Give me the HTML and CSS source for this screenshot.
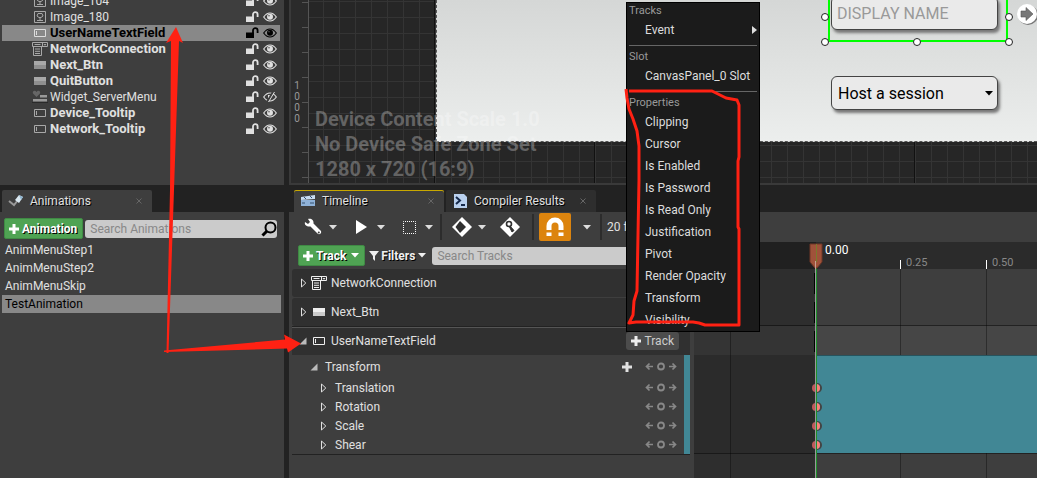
FILE: index.html
```
<!DOCTYPE html>
<html lang="en">
<head>
    <meta charset="UTF-8">
    <meta name="viewport" content="width=device-width, initial-scale=1.0">
    <title>Widget Blueprint Editor</title>
    <link rel="stylesheet" href="styles.css">
</head>
<body>
    <!-- icon set -->
    <svg class="defs" width="0" height="0">
        <symbol id="i-lock" viewBox="0 0 13 12"><path d="M0 5.500h8V11H0z" fill="currentColor"/><path d="M7 6V3.500a2.300 2.300 0 0 1 4.600 0V6" fill="none" stroke="currentColor" stroke-width="1.800"/></symbol>
        <symbol id="i-eye" viewBox="0 0 14 10"><path d="M.7 5C3 1.600 5 1 7 1s4 .6 6.300 4C11 8.400 9 9 7 9S3 8.400.7 5z" fill="none" stroke="currentColor" stroke-width="1.200"/><circle cx="7" cy="4.700" r="3" fill="currentColor"/><circle cx="6" cy="3.800" r=".8" fill="#555"/></symbol>
        <symbol id="i-eye-off" viewBox="0 0 14 10"><path d="M.7 5C3 1.600 5 1 7 1s4 .6 6.300 4C11 8.400 9 9 7 9S3 8.400.7 5z" fill="none" stroke="currentColor" stroke-width="1.200"/><path d="M5 3v4l4-4z" fill="currentColor"/><path d="M4 10l6-10" stroke="#3e3e3e" stroke-width="2"/><path d="M5.500 10l6-10" stroke="currentColor"/></symbol>
        <symbol id="i-image" viewBox="0 0 16 12"><path d="M2.500.5h11v11h-11zM5 9.500h6M8 9V6" fill="none" stroke="currentColor"/><path d="M6 2.500h4L11 5 9 6.500H7L5 5z" fill="none" stroke="currentColor"/></symbol>
        <symbol id="i-field" viewBox="0 0 16 14"><path d="M2.500 3.500h11v7h-11zM4.500 5v4" fill="none" stroke="currentColor"/></symbol>
        <symbol id="i-button" viewBox="0 0 16 14"><path d="M2 3h12v8H2z" fill="currentColor"/><path d="M2 7h12v4H2z" fill="#000" opacity=".15"/></symbol>
        <symbol id="i-combo" viewBox="0 0 16 14"><path d="M.5.5h15v4H.5zM10.500.5v4M2.500 2.500h6M1.500 4.500v9h8v-9M3 7h5M3 9.300h5M3 11.500h5" fill="none" stroke="currentColor"/><path d="M11.500 2h3L13 3.700z" fill="currentColor"/></symbol>
        <symbol id="i-user" viewBox="0 0 16 14"><path d="M4.500 7L1 3.500C0 1 3-.5 4.500 2 6-.5 9 1 8 3.500z" fill="#666"/><path d="M8 5h7v2.500H8zM1 9h14v2.500H1z" fill="#999"/><path d="M0 12h16v1H0z" fill="#2a2a2a"/></symbol>
        <symbol id="i-plus" viewBox="0 0 12 12"><path d="M4.500 1h3v3.500H11v3H7.500V11h-3V7.500H1v-3h3.500z" fill="currentColor"/></symbol>
        <symbol id="i-x" viewBox="0 0 6 6"><path d="M.5.5l5 5m0-5l-5 5" stroke="currentColor" fill="none"/></symbol>
        <symbol id="i-down" viewBox="0 0 8 5"><path d="M0 0h8L4 4.500z" fill="currentColor"/></symbol>
        <symbol id="i-shut" viewBox="0 0 6 10"><path d="M.5 1v8L4.800 5z" fill="none" stroke="currentColor"/></symbol>
        <symbol id="i-open" viewBox="0 0 8 8"><path d="M7.500.5v7h-7z" fill="currentColor"/></symbol>
        <symbol id="i-keys" viewBox="0 0 32 9"><path d="M8 4.500H2M4.500 1.500l-3 3 3 3M24 4.500h6M27.500 1.500l3 3-3 3" fill="none" stroke="currentColor" stroke-width="1.700"/><circle cx="16" cy="4.500" r="3" fill="none" stroke="currentColor" stroke-width="1.800"/></symbol>
    </svg>

    <div class="editor">
        <section class="hierarchy">
            <ul class="tree">
                <li><svg class="kind"><use href="#i-image"/></svg><span>Image_104</span><svg class="lock"><use href="#i-lock"/></svg><svg class="eye"><use href="#i-eye"/></svg></li>
                <li><svg class="kind"><use href="#i-image"/></svg><span>Image_180</span><svg class="lock"><use href="#i-lock"/></svg><svg class="eye"><use href="#i-eye"/></svg></li>
                <li class="var selected"><svg class="kind"><use href="#i-field"/></svg><span>UserNameTextField</span><svg class="lock"><use href="#i-lock"/></svg><svg class="eye"><use href="#i-eye"/></svg></li>
                <li class="var"><svg class="kind"><use href="#i-combo"/></svg><span>NetworkConnection</span><svg class="lock"><use href="#i-lock"/></svg><svg class="eye"><use href="#i-eye"/></svg></li>
                <li class="var"><svg class="kind"><use href="#i-button"/></svg><span>Next_Btn</span><svg class="lock"><use href="#i-lock"/></svg><svg class="eye"><use href="#i-eye"/></svg></li>
                <li class="var"><svg class="kind"><use href="#i-button"/></svg><span>QuitButton</span><svg class="lock"><use href="#i-lock"/></svg><svg class="eye"><use href="#i-eye"/></svg></li>
                <li><svg class="kind"><use href="#i-user"/></svg><span>Widget_ServerMenu</span><svg class="lock"><use href="#i-lock"/></svg><svg class="eye"><use href="#i-eye-off"/></svg></li>
                <li class="var"><svg class="kind"><use href="#i-field"/></svg><span>Device_Tooltip</span><svg class="lock"><use href="#i-lock"/></svg><svg class="eye"><use href="#i-eye"/></svg></li>
                <li class="var"><svg class="kind"><use href="#i-field"/></svg><span>Network_Tooltip</span><svg class="lock"><use href="#i-lock"/></svg><svg class="eye"><use href="#i-eye"/></svg></li>
            </ul>
        </section>

        <section class="designer">
            <div class="v-ruler"><span>1</span><span>0</span><span>0</span><span>0</span></div>
            <div class="stage">
                <div class="artboard">
                    <input class="widget name-field" type="text" placeholder="DISPLAY NAME" aria-label="Display name">
                    <select class="widget session" aria-label="Session"><option>Host a session</option></select>
                    <svg class="session-arrow"><use href="#i-down"/></svg>
                    <div class="selection">
                        <i class="handle ml"></i><i class="handle mr"></i>
                        <i class="handle bl"></i><i class="handle bc"></i><i class="handle br"></i>
                    </div>
                    <svg class="next" viewBox="0 0 22 22"><circle cx="12" cy="12" r="10" fill="#777"/><circle cx="11" cy="11" r="10" fill="#fff"/><path d="M5 8h5V4.500l7 6.500-7 6.500V14H5z" fill="#777" stroke="#555" stroke-width=".6"/></svg>
                </div>
                <div class="watermark">
                    <div>Device Content Scale 1.0</div>
                    <div>No Device Safe Zone Set</div>
                    <div>1280 x 720 (16:9)</div>
                </div>
            </div>
        </section>

        <section class="animations">
            <div class="tabs">
                <div class="tab">
                    <svg class="tab-icon" viewBox="0 0 16 16"><path d="M1 8l5 4 4-5" fill="none" stroke="#999" stroke-width="2"/><path d="M7 7l4-5 4 2-4 6z" fill="#dbe9f2"/><path d="M11 2l4 2-2 3z" fill="#8fb6d0"/></svg>
                    <span>Animations</span>
                    <svg class="close"><use href="#i-x"/></svg>
                </div>
            </div>
            <div class="panel">
                <div class="bar">
                    <button class="green"><svg class="plus"><use href="#i-plus"/></svg>Animation</button>
                    <label class="search">
                        <input type="text" placeholder="Search Animations" aria-label="Search Animations">
                        <svg class="glass" viewBox="0 0 16 16"><circle cx="9.500" cy="6.500" r="5" fill="none" stroke="#000" stroke-width="2"/><path d="M6 10l-4.500 4.500" stroke="#000" stroke-width="3"/></svg>
                    </label>
                </div>
                <ul class="anims">
                    <li>AnimMenuStep1</li>
                    <li>AnimMenuStep2</li>
                    <li>AnimMenuSkip</li>
                    <li class="selected">TestAnimation</li>
                </ul>
            </div>
        </section>

        <section class="sequencer">
            <div class="tabs">
                <div class="tab active">
                    <svg class="tab-icon" viewBox="0 0 16 16"><path d="M1 4l14-2v4L1 7z" fill="#c9dcf0"/><path d="M1 7h14v6H1z" fill="#8fb2d8"/><path d="M4 4l2 2M10 3l2 2M2 10h3M10 10h4" stroke="#34506e"/></svg>
                    <span>Timeline</span>
                    <svg class="close"><use href="#i-x"/></svg>
                </div>
                <div class="tab idle">
                    <svg class="tab-icon" viewBox="0 0 16 16"><path d="M2 1h10l3 3v11H2z" fill="#b9d0ee"/><path d="M4 4l4 3.500L4 11M9 12h4" fill="none" stroke="#14284a" stroke-width="2"/></svg>
                    <span>Compiler Results</span>
                    <svg class="close"><use href="#i-x"/></svg>
                </div>
            </div>
            <div class="toolbar">
                <button class="tool wide" aria-label="Options"><svg class="big" viewBox="0 0 20 20"><path d="M2 5l3 2 2-2-2-3c3-1 6 1 5.500 4.500l7 7c2 2-.8 5-3 3l-7-7C4 10 1 8 2 5z" fill="#fff"/><circle cx="15.800" cy="15.500" r="1" fill="#3e3e3e"/></svg><svg class="down"><use href="#i-down"/></svg></button>
                <button class="tool wide" aria-label="Play"><svg class="big" viewBox="0 0 20 20"><path d="M5 3l11 7-11 7z" fill="#fff"/></svg><svg class="down"><use href="#i-down"/></svg></button>
                <button class="tool wide" aria-label="Selection range"><svg class="big" viewBox="0 0 20 20"><path d="M4.500 4.500h12v12h-12z" fill="none" stroke="#fff" stroke-dasharray="1 1" stroke-dashoffset=".5"/></svg><svg class="down"><use href="#i-down"/></svg></button>
                <i class="sep"></i>
                <button class="tool wide" aria-label="Key options"><svg class="big" viewBox="0 0 20 20"><path d="M10 0l10 10-10 10L0 10z" fill="#fff"/><path d="M8 4l6 6-6 6-4.500-6z" fill="#303030"/></svg><svg class="down"><use href="#i-down"/></svg></button>
                <button class="tool" aria-label="Auto key"><svg class="big" viewBox="0 0 20 20"><path d="M10 0l10 10-10 10L0 10z" fill="#fff"/><circle cx="9" cy="7" r="2.500" fill="none" stroke="#303030" stroke-width="1.600"/><path d="M10 9l4 4.500-2 1.500-3-6" fill="#303030" stroke="#303030"/></svg></button>
                <i class="sep"></i>
                <button class="tool snap" aria-label="Snapping"><svg class="big" viewBox="0 0 20 20"><path d="M4 14V9a6 6 0 0 1 12 0v5" fill="none" stroke="#fff" stroke-width="5"/><path d="M1 13.500h6M13 13.500h6" stroke="#dc840e"/><path d="M1.500 15.500h5V19h-5zM13.500 15.500h5V19h-5z" fill="#fff"/></svg></button>
                <button class="tool snap-menu" aria-label="Snapping options"><svg class="down"><use href="#i-down"/></svg></button>
                <i class="sep"></i>
                <span class="fps">20 fps</span>
            </div>
            <div class="body">
                <div class="outliner">
                    <div class="bar">
                        <button class="green"><svg class="plus"><use href="#i-plus"/></svg>Track<svg class="down"><use href="#i-down"/></svg></button>
                        <button class="filters"><svg class="funnel" viewBox="0 0 10 10"><path d="M0 0h10L6 5v5L4 8V5z" fill="#eee"/></svg>Filters<svg class="down"><use href="#i-down"/></svg></button>
                        <label class="search"><input type="text" placeholder="Search Tracks" aria-label="Search Tracks"></label>
                    </div>
                    <div class="track"><svg class="shut"><use href="#i-shut"/></svg><svg class="kind"><use href="#i-combo"/></svg><span>NetworkConnection</span></div>
                    <div class="track"><svg class="shut"><use href="#i-shut"/></svg><svg class="kind"><use href="#i-button"/></svg><span>Next_Btn</span></div>
                    <div class="track current"><svg class="open"><use href="#i-open"/></svg><svg class="kind"><use href="#i-field"/></svg><span>UserNameTextField</span><button class="add-track"><svg class="plus"><use href="#i-plus"/></svg>Track</button></div>
                    <div class="group">
                        <div class="prop head"><svg class="open"><use href="#i-open"/></svg><span>Transform</span><svg class="plus"><use href="#i-plus"/></svg><svg class="keys"><use href="#i-keys"/></svg></div>
                        <div class="prop"><svg class="shut"><use href="#i-shut"/></svg><span>Translation</span><svg class="keys"><use href="#i-keys"/></svg></div>
                        <div class="prop"><svg class="shut"><use href="#i-shut"/></svg><span>Rotation</span><svg class="keys"><use href="#i-keys"/></svg></div>
                        <div class="prop"><svg class="shut"><use href="#i-shut"/></svg><span>Scale</span><svg class="keys"><use href="#i-keys"/></svg></div>
                        <div class="prop"><svg class="shut"><use href="#i-shut"/></svg><span>Shear</span><svg class="keys"><use href="#i-keys"/></svg></div>
                    </div>
                </div>
                <div class="timeline">
                    <div class="time-ruler">
                        <span class="tick t0">-0.25</span>
                        <span class="tick t2">0.25</span>
                        <span class="tick t3">0.50</span>
                    </div>
                    <div class="lane"></div>
                    <div class="lane"></div>
                    <div class="lane current"></div>
                    <div class="lane section"><div class="clip"><i></i><i></i><i></i><i></i></div></div>
                    <div class="before"></div>
                    <i class="line l0"></i><i class="line l2"></i><i class="line l3"></i>
                    <i class="mark m2"></i><i class="mark m3"></i>
                    <div class="starts"><i></i><i></i><i></i></div>
                    <i class="playline"></i>
                    <svg class="playhead" viewBox="0 0 14 26"><path d="M1 1h12v18l-5 6H6l-5-6z" fill="#a0523a" stroke="#6e3626"/><path d="M7.500 1v18" stroke="#7a7a2c"/><path d="M6.500 18v8" stroke="#c9a090"/></svg>
                    <span class="now">0.00</span>
                </div>
            </div>
        </section>
    </div>

    <div class="menu">
        <h4>Tracks</h4>
        <a href="#">Event<svg class="more" viewBox="0 0 5 8"><path d="M0 0l5 4-5 4z" fill="#ddd"/></svg></a>
        <hr>
        <h4>Slot</h4>
        <a href="#">CanvasPanel_0 Slot</a>
        <hr>
        <h4>Properties</h4>
        <a href="#">Clipping</a>
        <a href="#">Cursor</a>
        <a href="#">Is Enabled</a>
        <a href="#">Is Password</a>
        <a href="#">Is Read Only</a>
        <a href="#">Justification</a>
        <a href="#">Pivot</a>
        <a href="#">Render Opacity</a>
        <a href="#">Transform</a>
        <a href="#">Visibility</a>
    </div>

    <!-- red markup over the editor -->
    <svg class="notes" viewBox="0 0 760 360" width="760" height="360">
        <path d="M176 27l7 16-4-2-5 149-5.500 163h-2L170 190l1-149-5 2z" fill="#ff2113"/>
        <path d="M164 350.500l121-11-1-5 17 9-13 9-1-4-123 3.500z" fill="#ff2113"/>
        <path d="M626 89l1 9 2 11 4 10 4 12 2 15v34l-1 55-1 56-3 10-1 14-4 8 7-1h57l6 1 6 2h34V229l-1-2v-66l1-4v-52l-2-5-11-2-14-7h-83" fill="none" stroke="#ff2113" stroke-width="3" stroke-linejoin="round"/>
    </svg>
</body>
</html>
```
FILE: styles.css
```
* {
    box-sizing: border-box;
}
body {
    margin: 0;
    background: #222;
    color: #e0e0e0;
    font-family: Roboto, sans-serif;
    font-size: 12px;
    line-height: 16px;
    overflow: hidden;
}
ul {
    list-style: none;
    margin: 0;
    padding: 0;
}
button {
    display: flex;
    align-items: center;
    border: none;
    padding: 0;
    background: none;
    color: #f0f0f0;
    font: inherit;
}
svg {
    flex: none;
}
.defs {
    position: absolute;
}
.editor {
    display: grid;
    grid-template-columns: 284px 1fr;
    grid-template-rows: 185px 1fr;
    gap: 5px;
    height: 100vh;
}

/* hierarchy */
.hierarchy {
    background: #3e3e3e;
    overflow: hidden;
}
.tree {
    margin: -7px 4px 0 2px;
}
.tree li {
    display: flex;
    align-items: center;
    height: 16px;
    padding: 0 3px 0 30px;
}
.tree span {
    flex: 1;
    margin-left: 2px;
}
.tree .var {
    font-size: 13px;
    font-weight: bold;
}
.tree .selected {
    background: #888;
    color: #000;
}
.tree .selected .kind {
    color: #ddd;
}
.kind {
    width: 16px;
    height: 14px;
    color: #a8a8a8;
}
.lock {
    width: 13px;
    height: 12px;
    margin-right: 4px;
}
.eye {
    width: 14px;
    height: 10px;
}

/* designer */
.designer {
    display: flex;
    border: 2px solid #3a3a3a;
    border-width: 0 0 2px 2px;
    overflow: hidden;
}
.v-ruler {
    width: 18px;
    padding: 80px 5px 0 0;
    border-right: 1px solid #555;
    background: repeating-linear-gradient(#555 0 1px, transparent 1px 25px) right 2px / 6px 100%, #2b2b2b;
    background-repeat: no-repeat;
    color: #999;
    font-size: 10px;
    line-height: 11px;
    text-align: center;
}
.v-ruler span {
    display: block;
}
.stage {
    position: relative;
    flex: 1;
    background:
        repeating-linear-gradient(90deg, transparent 0 125px, #111 125px 126px, transparent 126px 160px),
        repeating-linear-gradient(90deg, transparent 0 14px, #343434 14px 15px, transparent 15px 16px),
        repeating-linear-gradient(transparent 0 1px, #343434 1px 2px, transparent 2px 16px),
        #262626;
}
.artboard {
    position: absolute;
    left: 127px;
    right: 0;
    top: 0;
    height: 142px;
    background: linear-gradient(#d5d7d6, #eceeed);
    border-left: 1px dashed #555;
    border-bottom: 1px dashed #555;
}
.widget {
    position: absolute;
    left: 394px;
    width: 167px;
    height: 34px;
    padding: 0 6px;
    border: 1px solid #444;
    border-radius: 6px;
    background: #eaeaea;
    box-shadow: 2px 3px 3px #777;
    color: #000;
    font: 16px Roboto, sans-serif;
    appearance: none;
}
.name-field {
    top: -4px;
    padding: 0 5px;
}
.name-field::placeholder {
    color: #999;
}
.session {
    top: 76px;
}
.session-arrow {
    position: absolute;
    left: 548px;
    top: 91px;
    width: 8px;
    height: 5px;
    color: #000;
}
.selection {
    position: absolute;
    left: 391px;
    top: -50px;
    width: 180px;
    height: 92px;
    border: 2px solid #0f0;
}
.handle {
    position: absolute;
    width: 8px;
    height: 8px;
    border: 1px solid #222;
    border-radius: 50%;
    background: #fff;
}
.ml, .bl {
    left: -9px;
}
.mr, .br {
    right: -7px;
}
.ml, .mr {
    top: 61px;
}
.bl, .bc, .br {
    bottom: -6px;
}
.bc {
    left: 83px;
}
.next {
    position: absolute;
    left: 579px;
    top: 3px;
    width: 22px;
    height: 22px;
}
.watermark {
    position: absolute;
    left: 6px;
    top: 107px;
    color: rgba(255, 255, 255, 0.28);
    font-size: 20px;
    font-weight: bold;
    line-height: 25px;
}

/* tabs */
.tabs {
    display: flex;
    gap: 2px;
    height: 22px;
}
.tab {
    display: flex;
    align-items: center;
    width: 150px;
    padding: 0 10px 0 6px;
    background: #3e3e3e;
    border-radius: 2px 2px 0 0;
    text-shadow: 1px 1px #000;
}
.tab span {
    flex: 1;
    margin-left: 6px;
}
.tab-icon {
    width: 16px;
    height: 16px;
}
.tab.active {
    box-shadow: inset 0 1px #c8a800;
}
.tab.idle {
    background: #2e2e2e;
}
.close {
    width: 6px;
    height: 6px;
    color: #666;
}

/* shared bar */
.bar {
    display: flex;
    align-items: center;
}
.green {
    height: 21px;
    padding: 0 5px 0 3px;
    border: 1px solid #3f8a44;
    border-radius: 2px;
    background: #4fa353;
    color: #fff;
    font-weight: bold;
    text-shadow: 1px 1px #000;
}
.plus {
    width: 12px;
    height: 12px;
    margin-right: 2px;
}
.down {
    width: 8px;
    height: 5px;
    margin-left: 5px;
}
.search {
    display: flex;
    flex: 1;
    align-items: center;
    height: 18px;
    border-radius: 3px;
    background: #cbcbcb;
}
.search input {
    flex: 1;
    min-width: 0;
    padding: 0 5px;
    border: none;
    background: none;
    font: inherit;
}
.search input::placeholder {
    color: #888;
}
.glass {
    width: 16px;
    height: 16px;
}

/* animations */
.animations, .sequencer {
    display: flex;
    flex-direction: column;
    min-width: 0;
}
.animations .tabs {
    padding-left: 2px;
}
.panel {
    flex: 1;
    padding: 6px 3px 0 2px;
    background: #3e3e3e;
}
.panel .bar {
    gap: 2px;
    padding: 0 4px 0 2px;
}
.anims {
    margin-top: 2px;
}
.anims li {
    height: 18px;
    padding-left: 3px;
    line-height: 18px;
}
.anims .selected {
    background: #888;
    color: #000;
}

/* sequencer */
.sequencer .tabs {
    padding-left: 5px;
}
.toolbar {
    display: flex;
    align-items: center;
    height: 30px;
    padding-left: 14px;
    background: #3e3e3e;
}
.tool .down {
    margin-left: 6px;
    color: #ddd;
}
.wide {
    width: 48px;
}
.big {
    width: 20px;
    height: 20px;
}
.sep {
    width: 2px;
    height: 26px;
    margin: 0 10px 0 -7px;
    background: #2c2c2c;
}
.snap {
    justify-content: center;
    width: 32px;
    height: 28px;
    border-radius: 2px;
    background: #dc840e;
}
.tool + .sep + .snap {
    margin-left: -5px;
}
.tool:nth-of-type(5) {
    margin-right: 19px;
}
.snap-menu {
    width: 36px;
    padding-left: 6px;
}
.fps {
    margin-left: -5px;
}
.body {
    display: grid;
    flex: 1;
    grid-template-columns: 405px 1fr;
}
.outliner {
    padding: 0 4px 0 3px;
    background: #3e3e3e;
}
.outliner .bar {
    gap: 4px;
    height: 27px;
    padding-left: 6px;
}
.filters {
    font-weight: bold;
    text-shadow: 1px 1px #000;
}
.funnel {
    width: 10px;
    height: 10px;
    margin-right: 2px;
}
.bar .filters .down {
    margin-left: 3px;
}
.outliner .bar .search {
    margin-left: 2px;
}
.track {
    display: flex;
    align-items: center;
    height: 28px;
    margin-bottom: 1px;
    padding-left: 9px;
    border-radius: 3px;
    background: #303030;
}
.track .kind {
    margin: 0 4px;
    color: #eee;
}
.track span, .prop span {
    flex: 1;
}
.track.current {
    margin: 0;
    box-shadow: inset 0 1px #555, 0 -1px #222;
    border-radius: 0;
}
.shut {
    width: 6px;
    height: 10px;
}
.open {
    width: 8px;
    height: 8px;
    margin-left: -2px;
    color: #bbb;
}
.add-track {
    height: 18px;
    margin-right: 11px;
    padding: 0 5px 0 4px;
    border-radius: 3px;
    background: #4c4c4c;
    color: #ccc;
}
.add-track .plus {
    margin-right: 3px;
    color: #eee;
}
.group {
    border-right: 6px solid #418795;
    box-shadow: 0 1px #222;
}
.prop {
    display: flex;
    align-items: center;
    height: 19px;
    padding: 0 7px 0 29px;
}
.prop.head {
    height: 23px;
    padding-left: 20px;
}
.prop .shut {
    margin-right: 8px;
}
.prop .open {
    margin-right: 7px;
}
.prop .plus {
    margin-right: 12px;
}
.keys {
    width: 32px;
    height: 9px;
    color: #888;
}

/* timeline */
.timeline {
    position: relative;
    background: #3e3e3e;
    overflow: hidden;
}
.time-ruler {
    height: 27px;
    background: #2b2b2b;
    color: #888;
    font-size: 11px;
}
.tick {
    position: absolute;
    top: 13px;
}
.t0 {
    left: 41px;
}
.t2 {
    left: 212px;
}
.t3 {
    left: 298px;
}
.lane {
    height: 28px;
}
.lane.current {
    height: 30px;
    border-top: 1px solid #222;
    background: #464646;
}
.lane.section {
    height: 99px;
    padding-left: 123px;
    background: #3a3a3a;
    border-bottom: 1px solid #222;
}
.clip {
    position: relative;
    z-index: 1;
    display: flex;
    flex-direction: column;
    gap: 11px;
    height: 98px;
    padding-top: 28px;
    border-top: 1px solid #26545e;
    background: #418795;
}
.clip i {
    width: 8px;
    height: 8px;
    margin-left: -5px;
    border-radius: 50%;
    background: linear-gradient(90deg, #c05a5a 50%, #fb8078 50%);
    box-shadow: 1px 0 0 1px #444;
}
.before {
    position: absolute;
    left: 0;
    top: 0;
    bottom: 0;
    width: 122px;
    background: rgba(0, 0, 0, 0.25);
}
.line {
    position: absolute;
    top: 27px;
    bottom: 0;
    width: 1px;
    background: rgba(0, 0, 0, 0.35);
}
.mark {
    position: absolute;
    top: 18px;
    width: 1px;
    height: 9px;
    background: #fff;
}
.l0 {
    left: 36px;
}
.l2, .m2 {
    left: 206px;
}
.l3, .m3 {
    left: 292px;
}
.starts {
    position: absolute;
    left: 120px;
    top: 31px;
    display: grid;
    gap: 8px;
}
.starts i {
    width: 2px;
    height: 21px;
    border-left: 1px solid #000;
    background: #fff;
}
.playline {
    position: absolute;
    z-index: 2;
    left: 121px;
    top: 20px;
    bottom: 0;
    width: 2px;
    border-left: 1px solid #999;
    background: #1f8f2a;
}
.playhead {
    position: absolute;
    z-index: 2;
    left: 115px;
    top: 1px;
    width: 14px;
    height: 26px;
}
.now {
    position: absolute;
    left: 131px;
    top: 0;
    color: #fff;
}

/* track menu */
.menu {
    position: absolute;
    z-index: 3;
    left: 626px;
    top: 2px;
    width: 134px;
    height: 330px;
    padding: 0 2px;
    border: 1px solid #000;
    background: #1b1b1b;
    overflow: hidden;
}
.menu h4 {
    margin: 0;
    color: #999;
    font-size: 11px;
    font-weight: normal;
}
.menu a {
    display: flex;
    align-items: center;
    justify-content: space-between;
    height: 22px;
    padding-left: 16px;
    color: #ddd;
    text-decoration: none;
    white-space: nowrap;
}
.menu hr {
    height: 1px;
    margin: 4px 0 3px;
    border: none;
    background: #666;
}
.more {
    width: 5px;
    height: 8px;
}
.notes {
    position: absolute;
    z-index: 4;
    left: 0;
    top: 0;
    pointer-events: none;
}
```
